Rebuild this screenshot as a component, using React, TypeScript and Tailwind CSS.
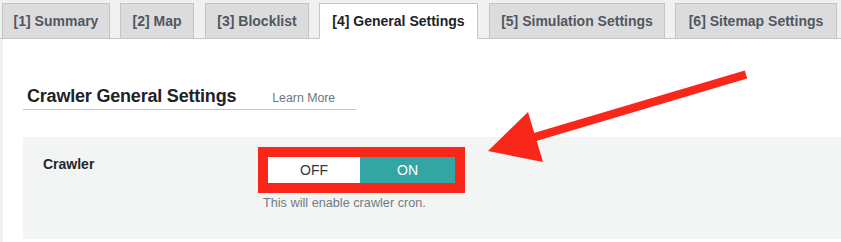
import React from "react";

const tabs = [
  { label: "[1] Summary", w: "w-[108px]", ml: "ml-0" },
  { label: "[2] Map", w: "w-[74px]", ml: "ml-[10px]" },
  { label: "[3] Blocklist", w: "w-[104px]", ml: "ml-[11px]" },
  { label: "[4] General Settings", w: "w-[159px]", ml: "ml-[10px]", active: true },
  { label: "[5] Simulation Settings", w: "w-[176px]", ml: "ml-[11px]" },
  { label: "[6] Sitemap Settings", w: "w-[162px]", ml: "ml-[10px]" },
];

export default function App() {
  return (
    <div className="relative w-[841px] h-[242px] overflow-hidden bg-[#f0f0f1] font-['Liberation_Sans',Arial,sans-serif]">
      <div className="flex items-end pt-[3px] pl-[2px] border-b border-[#c3c4c7]">
        {tabs.map((t) => (
          <div
            key={t.label}
            className={
              t.active
                ? `${t.w} ${t.ml} h-[36px] -mb-px flex items-center justify-center pt-[1px] border border-[#c3c4c7] border-b-white bg-white text-[14px] font-bold text-[#1d2327] whitespace-nowrap`
                : `${t.w} ${t.ml} h-[36px] -mb-px flex items-center justify-center pt-[1px] border border-[#c3c4c7] bg-[#dcdcde] text-[14px] font-bold text-[#50575e] whitespace-nowrap`
            }
          >
            {t.label}
          </div>
        ))}
      </div>

      <div className="ml-[3px] h-[203px] bg-white">
        <div className="ml-[20px] w-[333px] pt-[45px]">
          <div className="flex items-baseline pl-[4px] pb-[1px] border-b border-[#c3c4c7]">
            <h2 className="text-[18px] leading-[24px] font-bold tracking-[-0.2px] text-[#1d2327]">
              Crawler General Settings
            </h2>
            <span className="ml-[36px] text-[12.3px] text-[#6c7781]">Learn More</span>
          </div>
        </div>

        <div className="ml-[20px] mt-[27px] h-[102px] bg-[#f3f4f4] flex items-start pl-[20px] pt-[10px]">
          <div className="w-[215px] mt-[7px] text-[14px] leading-[20px] font-bold text-[#23282d]">
            Crawler
          </div>
          <div className="flex flex-col items-start">
            <div className="flex border-[10px] border-[#f9261a]">
              <div className="w-[92px] h-[26px] flex items-center justify-center bg-white text-[14px] text-[#32373c]">
                OFF
              </div>
              <div className="w-[95px] h-[26px] flex items-center justify-center bg-[#33a6a3] text-[14px] text-white">
                ON
              </div>
            </div>
            <div className="ml-[5px] mt-[1.5px] text-[12.7px] leading-[16px] text-[#6f7c86] whitespace-nowrap">
              This will enable crawler cron.
            </div>
          </div>
        </div>
      </div>

      <svg
        className="absolute left-0 top-0 pointer-events-none"
        width="841"
        height="242"
        viewBox="0 0 841 242"
      >
        <line x1="746" y1="74.5" x2="530" y2="138.5" stroke="#f9261a" strokeWidth="8.5" />
        <polygon points="488,151 528,112 543,162" fill="#f9261a" />
      </svg>
    </div>
  );
}
